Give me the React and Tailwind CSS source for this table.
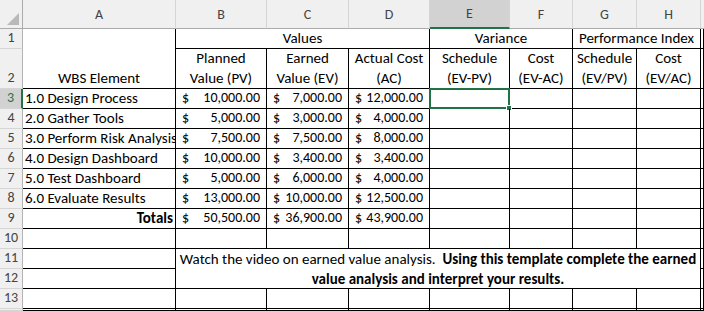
import React from 'react';

const GRID = 'border-[#d9d9d9]';
const BLACK = 'border-black';

const rows = [
  ['1.0 Design Process', '10,000.00', '7,000.00', '12,000.00'],
  ['2.0 Gather Tools', '5,000.00', '3,000.00', '4,000.00'],
  ['3.0 Perform Risk Analysis', '7,500.00', '7,500.00', '8,000.00'],
  ['4.0 Design Dashboard', '10,000.00', '3,400.00', '3,400.00'],
  ['5.0 Test Dashboard', '5,000.00', '6,000.00', '4,000.00'],
  ['6.0 Evaluate Results', '13,000.00', '10,000.00', '12,500.00'],
];

// row / column headers
function ColHead({ children, active }) {
  return (
    <div
      className={
        'flex items-center justify-center border-r border-[#d5d5d5] text-[14px] text-[#444] ' +
        (active ? 'bg-[#d2d2d2] border-b-2 border-b-[#217346]' : 'bg-[#f0f0f0] border-b border-b-[#ababab]')
      }
    >
      {children}
    </div>
  );
}

function RowHead({ children, active }) {
  return (
    <div
      className={
        'flex items-end justify-center border-b border-[#d5d5d5] pb-[1px] text-[14px] leading-[18px] ' +
        (active ? 'bg-[#d2d2d2] text-[#217346] border-r-2 border-r-[#217346]' : 'bg-[#f0f0f0] text-[#444] border-r border-r-[#b4b4b4]')
      }
    >
      {children}
    </div>
  );
}

function Money({ value }) {
  return (
    <div className="flex items-end justify-between border-r border-b border-black px-[6px] pb-[1px] text-[14px] leading-[18px]">
      <span>$</span>
      <span>{value}</span>
    </div>
  );
}

function Empty({ r = GRID, b = GRID, children, className = '' }) {
  return <div className={`border-r border-b ${r.replace('border-', 'border-r-')} ${b.replace('border-', 'border-b-')} ${className}`}>{children}</div>;
}

export default function App() {
  return (
    <div className="h-[311px] w-[704px] overflow-hidden bg-white font-['Carlito','Lato',sans-serif] text-[15px] text-black">
      <div className="grid grid-cols-[23px_153px_91px_82px_81px_80px_63px_64px_64px_1fr] grid-rows-[29px_20px_40px_repeat(11,20px)_1fr] h-full">
        {/* header row */}
        <div className="relative border-r border-b border-[#ababab] bg-[#f0f0f0]">
          <svg className="absolute right-[3px] bottom-[3px]" width="12" height="12" viewBox="0 0 12 12">
            <polygon points="12,0 12,12 0,12" fill="#b9b9b9" />
          </svg>
        </div>
        <ColHead>A</ColHead>
        <ColHead>B</ColHead>
        <ColHead>C</ColHead>
        <ColHead>D</ColHead>
        <ColHead active>E</ColHead>
        <ColHead>F</ColHead>
        <ColHead>G</ColHead>
        <ColHead>H</ColHead>
        <div className="border-b border-[#ababab] bg-[#f0f0f0]" />

        {/* row 1 */}
        <RowHead>1</RowHead>
        <div className="row-span-2 flex items-end justify-center border-r border-b border-black pb-[1px] leading-[18px]">
          WBS Element
        </div>
        <div className="col-span-3 flex items-end justify-center border-r border-b border-black pb-[1px] leading-[18px]">Values</div>
        <div className="col-span-2 flex items-end justify-center border-r border-b border-black pb-[1px] leading-[18px]">Variance</div>
        <div className="col-span-2 flex items-end justify-center border-r border-b border-black pb-[1px] leading-[18px] whitespace-nowrap">
          Performance Index
        </div>
        <Empty />

        {/* row 2 */}
        <RowHead>2</RowHead>
        {[
          ['Planned', 'Value (PV)'],
          ['Earned', 'Value (EV)'],
          ['Actual Cost', '(AC)'],
          ['Schedule', '(EV-PV)'],
          ['Cost', '(EV-AC)'],
          ['Schedule', '(EV/PV)'],
          ['Cost', '(EV/AC)'],
        ].map(([a, b], i) => (
          <div key={i} className="flex flex-col items-center justify-end border-r border-b border-black leading-[20px] whitespace-nowrap">
            <span>{a}</span>
            <span>{b}</span>
          </div>
        ))}
        <Empty />

        {/* rows 3-8 */}
        {rows.map((r, i) => (
          <React.Fragment key={i}>
            <RowHead active={i === 0}>{i + 3}</RowHead>
            <div className="flex items-end overflow-hidden whitespace-nowrap border-r border-b border-black pl-[2px] pb-[1px] leading-[18px]">
              {r[0]}
            </div>
            <Money value={r[1]} />
            <Money value={r[2]} />
            <Money value={r[3]} />
            <div className="relative border-r border-b border-black">
              {i === 0 && (
                <div className="absolute -left-[1px] -top-[1px] -right-[1px] -bottom-[1px] border-2 border-[#217346]">
                  <div className="absolute -right-[4px] -bottom-[4px] h-[6px] w-[6px] border border-white bg-[#217346]" />
                </div>
              )}
            </div>
            <Empty r={BLACK} b={BLACK} />
            <Empty r={BLACK} b={BLACK} />
            <Empty r={BLACK} b={BLACK} />
            <Empty />
          </React.Fragment>
        ))}

        {/* row 9 totals */}
        <RowHead>9</RowHead>
        <div className="flex items-end justify-end border-r border-b border-black pr-[2px] pb-[1px] font-bold leading-[18px]">Totals</div>
        <Money value="50,500.00" />
        <Money value="36,900.00" />
        <Money value="43,900.00" />
        <Empty r={BLACK} b={BLACK} />
        <Empty r={BLACK} b={BLACK} />
        <Empty r={BLACK} b={BLACK} />
        <Empty r={BLACK} b={BLACK} />
        <Empty />

        {/* row 10 */}
        <RowHead>10</RowHead>
        <Empty />
        {[0, 1, 2, 3, 4, 5, 6].map((k) => (
          <Empty key={k} b={BLACK} />
        ))}
        <Empty />

        {/* row 11 */}
        <RowHead>11</RowHead>
        <Empty r={BLACK} />
        <div className="col-span-7 row-span-2 flex flex-col items-center overflow-hidden border-r border-b border-black leading-[20px] whitespace-nowrap">
          <span>
            Watch the video on earned value analysis.&nbsp; <b>Using this template complete the earned</b>
          </span>
          <b>value analysis and interpret your results.</b>
        </div>
        <Empty />

        {/* row 12 */}
        <RowHead>12</RowHead>
        <Empty r={BLACK} />
        <Empty />

        {/* row 13 */}
        <RowHead>13</RowHead>
        {[0, 1, 2, 3, 4, 5, 6, 7, 8].map((k) => (
          <Empty key={k} />
        ))}

        {/* partial row 14, number hidden below the fold */}
        <RowHead />
        {[0, 1, 2, 3, 4, 5, 6, 7, 8].map((k) => (
          <Empty key={k} />
        ))}
      </div>
    </div>
  );
}
